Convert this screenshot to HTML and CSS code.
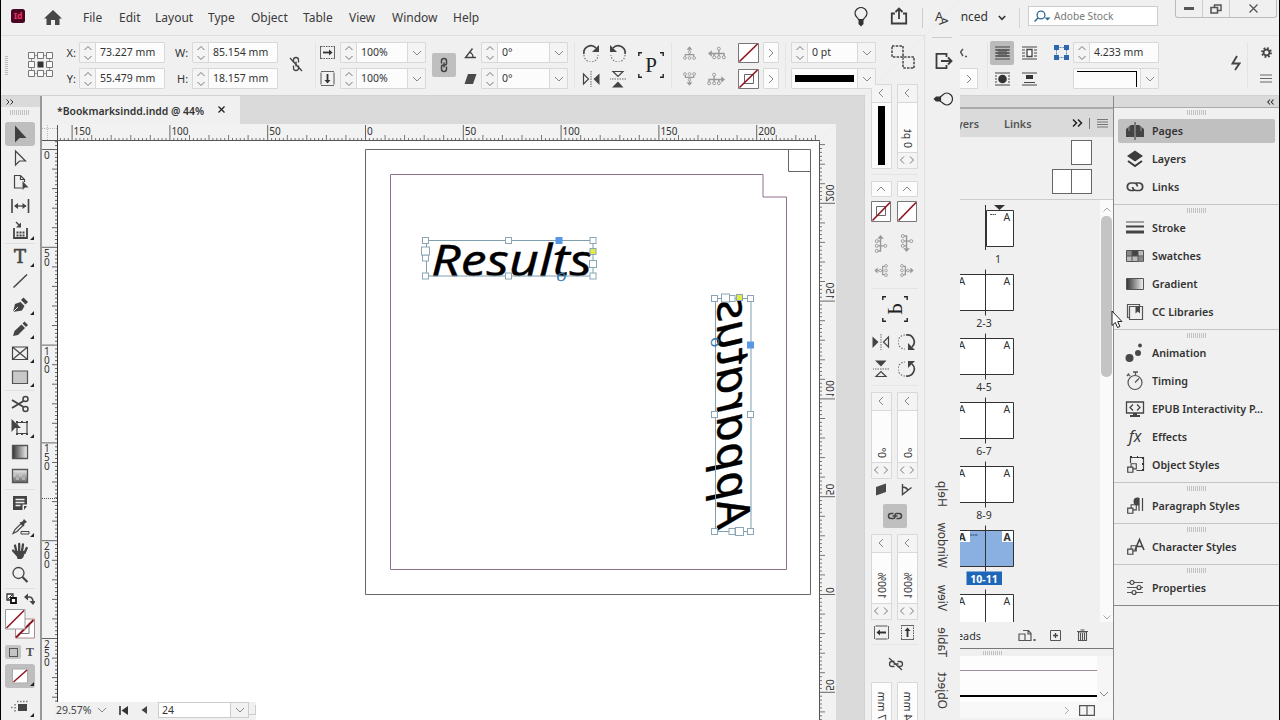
FILE: index.html
```html
<!DOCTYPE html>
<html lang="en">
<head>
<meta charset="utf-8">
<title>Bookmarksindd.indd</title>
<link rel="stylesheet" href="styles.css">
</head>
<body>
<svg class="defs" width="0" height="0" aria-hidden="true">
<defs>
<linearGradient id="gr"><stop offset="0" stop-color="#333"/><stop offset="1" stop-color="#f4f4f4"/></linearGradient>
<linearGradient id="grv" x2="0" y2="1"><stop offset="0" stop-color="#eee"/><stop offset="1" stop-color="#666"/></linearGradient>
<symbol id="none" viewBox="0 0 21 20"><path d="M.5.5h20v19H.5z" fill="#fff" stroke="#777"/><path d="M1.5 18.5 19.5 1" stroke="#8f1722" stroke-width="1.7"/></symbol>
<symbol id="noneS" viewBox="0 0 21 20"><path d="M.5.5h20v19H.5z" fill="#fff" stroke="#777"/><path d="M6.5 5.500h9v9h-9z" fill="none" stroke="#666"/><path d="M1.500 18.500 19.500 1" stroke="#8f1722" stroke-width="1.700"/></symbol>
<symbol id="ref" viewBox="0 0 25 25"><path d="M3.500 3.500h18v18h-18z" fill="none" stroke="#999"/><g fill="#f8f8f8" stroke="#777"><path d="M.5.5h6v6h-6zM9.500.5h6v6h-6zM18.500.5h6v6h-6zM.5 9.500h6v6h-6zM18.500 9.500h6v6h-6zM.5 18.500h6v6h-6zM9.500 18.500h6v6h-6zM18.500 18.500h6v6h-6z"/></g><path d="M9.500 9.500h6v6h-6z" fill="#333"/></symbol>
<symbol id="unlink" viewBox="0 0 14 16"><g fill="none" stroke="#444" stroke-width="1.300"><path d="M4.500 6.500V4a2.500 2.500 0 0 1 5 0v2.500M9.500 9.500V12a2.500 2.500 0 0 1-5 0V9.500M7 5.500v5"/><path d="M1 2l12 13"/></g></symbol>
<symbol id="link" viewBox="0 0 14 16"><g fill="none" stroke="#444" stroke-width="1.500"><path d="M4.500 6.500V4a2.500 2.500 0 0 1 5 0v2.500q0 1.500-2 1.500M9.500 9.500V12a2.500 2.500 0 0 1-5 0V9.500q0-1.500 2-1.500M7 5.500v5"/></g></symbol>
<symbol id="sx" viewBox="0 0 15 15"><path d="M.5 1v13M14.500 1v13" stroke="#666"/><path d="M1 1.500h13M1 13.500h13" stroke="#555" stroke-dasharray="1.500 1"/><path d="M3 7.500h8" stroke="#333" stroke-width="1.800"/><path d="M9 4.500l3.500 3L9 10.500z" fill="#333"/></symbol>
<symbol id="sy" viewBox="0 0 15 15"><path d="M1 .5h13M1 14.500h13" stroke="#666"/><path d="M1 1.500v12M14 1.500v12" stroke="#555"/><path d="M7.500 3v8" stroke="#333" stroke-width="1.800"/><path d="M4.500 9l3 3.500 3-3.500z" fill="#333"/></symbol>
<symbol id="ang" viewBox="0 0 13 12"><path d="M8.500 1.500 1.500 10.500h10.500M6 5q3 2 3 5.500" fill="none" stroke="#444" stroke-width="1.400"/></symbol>
<symbol id="shear" viewBox="0 0 13 12"><path d="M4 1h8.500L9 11H.5z" fill="#4a4a4a"/></symbol>
<symbol id="rot" viewBox="0 0 18 18"><path d="M2 10a7 7 0 0 1 12-6" fill="none" stroke="#444" stroke-width="1.700"/><path d="M2 11a7 7 0 0 0 14 0" fill="none" stroke="#777" stroke-width="1.200" stroke-dasharray="1.500 1.500"/><path d="M17 1v7h-7z" fill="#444"/></symbol>
<symbol id="flip" viewBox="0 0 18 18"><path d="M1.500 4v10l5-5z" fill="none" stroke="#444" stroke-width="1.200"/><path d="M17.500 3.500v11.500l-6-6z" fill="#444"/><path d="M9 1v16" stroke="#666" stroke-dasharray="1.500 1"/></symbol>
<symbol id="tree" viewBox="0 0 18 18"><path d="M9 1l3.500 4h-7z" fill="#999"/><path d="M9 5v7M4 14v-3h10v3" fill="none" stroke="#999" stroke-width="1.500"/><g fill="#eee" stroke="#999"><circle cx="3.500" cy="15" r="1.700"/><circle cx="9" cy="15" r="1.700"/><circle cx="14.500" cy="15" r="1.700"/><circle cx="9" cy="8" r="1.600"/></g></symbol>
<symbol id="treeH" viewBox="0 0 20 18"><path d="M1 10l4-3.500v7z" fill="#999"/><path d="M4 10h14v3M12.500 6v7M7.500 13v-3" fill="none" stroke="#999" stroke-width="1.500"/><g fill="#eee" stroke="#999"><circle cx="7.500" cy="14" r="1.600"/><circle cx="12.500" cy="14" r="1.600"/><circle cx="17.800" cy="14" r="1.600"/><circle cx="12.500" cy="5" r="1.600"/></g></symbol>
<symbol id="pp" viewBox="0 0 26 26"><path d="M.8 4V.8H4M22 .8h3.200V4M.8 22v3.200H4M22 25.200h3.200V22" fill="none" stroke="#222" stroke-width="1.400"/><text x="13" y="20" text-anchor="middle" font-family="Liberation Serif,serif" font-size="21" fill="#222">P</text></symbol>
<symbol id="dash" viewBox="0 0 24 24"><g fill="none" stroke="#444" stroke-width="1.500" stroke-dasharray="2.500 1.200"><path d="M1 1h11v11H1zM12 12h11v11H12z"/></g></symbol>
<symbol id="ud" viewBox="0 0 10 16"><path d="M1.500 5 5 1.500 8.500 5M1.500 11 5 14.500 8.500 11" fill="none" stroke="#777"/></symbol>
<symbol id="dn" viewBox="0 0 10 6"><path d="M1 1l4 4 4-4" fill="none" stroke="#888"/></symbol>
<symbol id="rt" viewBox="0 0 6 10"><path d="M1 1l4 4-4 4" fill="none" stroke="#888"/></symbol>
<symbol id="sub" viewBox="0 0 11 11"><path d="M4.500.8h5.700v5.700H4.500z" fill="none" stroke="#444" stroke-width="1.200"/><path d="M.8 4.500h5.700v5.700H.8z" fill="#eee" stroke="#444" stroke-width="1.300"/></symbol>
</defs>
</svg>

<div class="app">
<div class="fold">
  <div id="menubar" class="menubar">
    <svg class="logo" viewBox="0 0 14 14"><rect width="14" height="14" rx="2.500" fill="#4a0820"/><text x="7" y="10.200" text-anchor="middle" font-family="Noto Sans,sans-serif" font-weight="700" font-size="8.500" fill="#f0306a">Id</text></svg>
    <svg class="home" viewBox="0 0 18 15"><path d="M9 0 0 8.500h2.500V15H7v-5h4v5h4.500V8.500H18z" fill="#484848"/></svg>
    <span class="m m-file">File</span><span class="m m-edit">Edit</span><span class="m m-layout">Layout</span><span class="m m-type">Type</span><span class="m m-object">Object</span><span class="m m-table">Table</span><span class="m m-view">View</span><span class="m m-window">Window</span><span class="m m-help">Help</span>
    <svg class="bulb" viewBox="0 0 14 20"><path d="M4.500 12.500C4 10.500 1 9.500 1 6.500a6 6 0 0 1 12 0c0 3-3 4-3.500 6z" fill="none" stroke="#333" stroke-width="1.200"/><path d="M4.500 13h5v4l-2.500 2.500L4.500 17z" fill="#333"/></svg>
    <svg class="share" viewBox="0 0 18 18"><path d="M5 6.500H1.800v10h14.400v-10H13M9 12V2M5.500 5 9 1.500 12.500 5" fill="none" stroke="#3c3c3c" stroke-width="1.800"/></svg>
    <i class="vline"></i>
    <span class="aa">A</span>
  </div>
  <div id="controlbar" class="controlbar">
    <i class="vgrip"></i>
    <svg class="c-ref" width="25" height="25"><use href="#ref"/></svg>
    <div class="pair lab"><span>X:</span><span>Y:</span></div>
    <div class="pair w86"><div class="field"><b><svg width="10" height="16"><use href="#ud"/></svg></b><span>73.227 mm</span></div><div class="field"><b><svg width="10" height="16"><use href="#ud"/></svg></b><span>55.479 mm</span></div></div>
    <div class="pair lab"><span>W:</span><span>H:</span></div>
    <div class="pair w86"><div class="field"><b><svg width="10" height="16"><use href="#ud"/></svg></b><span>85.154 mm</span></div><div class="field"><b><svg width="10" height="16"><use href="#ud"/></svg></b><span>18.157 mm</span></div></div>
    <svg class="mid" width="14" height="16"><use href="#unlink"/></svg>
    <i class="sep"></i>
    <div class="pair ic"><svg width="15" height="15"><use href="#sx"/></svg><svg width="15" height="15"><use href="#sy"/></svg></div>
    <div class="pair w86"><div class="field"><b><svg width="10" height="16"><use href="#ud"/></svg></b><span>100%</span><em><svg width="10" height="6"><use href="#dn"/></svg></em></div><div class="field"><b><svg width="10" height="16"><use href="#ud"/></svg></b><span>100%</span><em><svg width="10" height="6"><use href="#dn"/></svg></em></div></div>
    <div class="linkbtn"><svg width="14" height="16"><use href="#link"/></svg></div>
    <div class="pair ic"><svg width="13" height="12"><use href="#ang"/></svg><svg width="13" height="12"><use href="#shear"/></svg></div>
    <div class="pair w87"><div class="field"><b><svg width="10" height="16"><use href="#ud"/></svg></b><span>0°</span><em><svg width="10" height="6"><use href="#dn"/></svg></em></div><div class="field"><b><svg width="10" height="16"><use href="#ud"/></svg></b><span>0°</span><em><svg width="10" height="6"><use href="#dn"/></svg></em></div></div>
    <i class="sep"></i>
    <div class="pair ic"><svg width="18" height="18"><use href="#rot"/></svg><svg width="18" height="18"><use href="#flip"/></svg></div>
    <div class="pair ic"><svg width="18" height="18" class="fx"><use href="#rot"/></svg><svg width="18" height="18" class="r90"><use href="#flip"/></svg></div>
    <svg class="c-ref" width="26" height="26"><use href="#pp"/></svg>
    <i class="sep"></i>
    <div class="pair ic"><svg width="15" height="18"><use href="#tree"/></svg><svg width="15" height="18" class="fy"><use href="#tree"/></svg></div>
    <div class="pair ic"><svg width="19" height="17"><use href="#treeH"/></svg><svg width="19" height="17" class="fx"><use href="#treeH"/></svg></div>
    <div class="pair ic"><svg width="21" height="20"><use href="#none"/></svg><svg width="21" height="20"><use href="#noneS"/></svg></div>
    <div class="pair w15"><div class="field nb"><svg width="6" height="10"><use href="#rt"/></svg></div><div class="field nb"><svg width="6" height="10"><use href="#rt"/></svg></div></div>
    <i class="sep"></i>
    <div class="pair w85"><div class="field"><b><svg width="10" height="16"><use href="#ud"/></svg></b><span>0 pt</span><em><svg width="10" height="6"><use href="#dn"/></svg></em></div><div class="field"><span class="stroke"></span><em><svg width="10" height="6"><use href="#dn"/></svg></em></div></div>
    <svg class="c-dash" width="24" height="24"><use href="#dash"/></svg>
  </div>

  <div class="body">
    <div class="tools">
      <div class="thead"><svg width="8" height="6"><path d="M.5.5 3 3 .5 5.500M4.500.5 7 3 4.500 5.500" fill="none" stroke="#333"/></svg></div>
      <i class="grip"></i>
      <div class="tool on"><svg viewBox="0 0 24 24"><path d="M7 3.500v17l4.500-4.500H18.500z" fill="#404040"/></svg></div>
      <div class="tool"><svg viewBox="0 0 24 24"><path d="M7.500 5v14l4-4h6z" fill="none" stroke="#444" stroke-width="1.200"/></svg></div>
      <div class="tool"><svg viewBox="0 0 24 24"><path d="M14 18H6.500V5.500h6l4 4V12M12.500 5.500v4h4" fill="none" stroke="#444" stroke-width="1.200"/><path d="M14.500 11v9l2.500-2.500h3.500z" fill="#444"/></svg></div>
      <div class="tool"><svg viewBox="0 0 24 24"><path d="M4 5v14M20.500 5v14" stroke="#444" stroke-width="1.600"/><path d="M7 12h11" stroke="#444" stroke-width="1.300"/><path d="M6 12l4-3v6zM18.500 12l-4-3v6z" fill="#444"/></svg></div>
      <div class="tool sb"><svg viewBox="0 0 24 24"><path d="M6 10v10h13V10" fill="none" stroke="#444" stroke-width="1.800"/><path d="M8.500 17.500h8M8.500 14.500h8" stroke="#444" stroke-width="2" stroke-dasharray="2 1"/><path d="M8 4l4 4" stroke="#444" stroke-width="1.400"/><path d="M13 4.500v5H8z" fill="#444"/></svg></div>
      <hr>
      <div class="tool sb"><svg viewBox="0 0 24 24"><text x="12" y="18" text-anchor="middle" font-family="DejaVu Serif,serif" font-size="18" fill="#444" stroke="#444" stroke-width=".6">T</text></svg></div>
      <div class="tool"><svg viewBox="0 0 24 24"><path d="M5.500 18.500 19 5.500" stroke="#444" stroke-width="1.500"/></svg></div>
      <div class="tool sb"><svg viewBox="0 0 24 24"><path d="M5 19l2-8 5.500-2 4 4L14 17.500z" fill="#444"/><path d="M13 7l2.500-2.500 4.500 4.500-2.500 2.500z" fill="#444"/><path d="M5 19l5-5" stroke="#eee"/></svg></div>
      <div class="tool sb"><svg viewBox="0 0 24 24"><path d="M5 19l1.500-5 7-6.500 3.500 3.500-7 7z" fill="#444"/><path d="M14.500 6.500l2-2 3.500 3.500-2 2z" fill="#444"/></svg></div>
      <div class="tool sb"><svg viewBox="0 0 24 24"><path d="M4.500 6h15v12.500h-15zM4.500 6l15 12.500M19.500 6l-15 12.500" fill="none" stroke="#444" stroke-width="1.200"/></svg></div>
      <div class="tool sb"><svg viewBox="0 0 24 24"><path d="M4.500 6h15v12.500h-15z" fill="#c8c8c8" stroke="#555" stroke-width="1.200"/></svg></div>
      <hr>
      <div class="tool"><svg viewBox="0 0 24 24"><g fill="none" stroke="#444" stroke-width="1.500"><circle cx="17.500" cy="7" r="2.500"/><circle cx="17.500" cy="17" r="2.500"/><path d="M15.500 9 4 16M15.500 15 4 8" stroke-width="2"/></g></svg></div>
      <div class="tool sb"><svg viewBox="0 0 24 24"><path d="M9 6.500h10v11H9z" fill="none" stroke="#444" stroke-width="1.200"/><path d="M8 5h2v2H8zM18 5h2v2h-2zM18 17h2v2h-2zM8 17h2v2H8zM13 5h2v2h-2zM13 17h2v2h-2z" fill="#444"/><path d="M3.500 3v13l3.500-4h6z" fill="#444"/></svg></div>
      <div class="tool"><svg viewBox="0 0 24 24"><path d="M4.500 5.500h15v13h-15z" fill="url(#gr)" stroke="#555" stroke-width="1.300"/></svg></div>
      <div class="tool"><svg viewBox="0 0 24 24"><path d="M4.500 5.500h15v13h-15z" fill="url(#grv)" stroke="#555" stroke-width="1.300"/><path d="M5 10h3v3H5zM11 10h3v3h-3zM8 13h3v3H8zM14 13h3v3h-3z" fill="#ccc" opacity=".6"/></svg></div>
      <hr>
      <div class="tool"><svg viewBox="0 0 24 24"><path d="M5 5h14v8.500h-4.500V19H5zM16 19v-4h3z" fill="#444"/><path d="M7.500 8.500h9M7.500 11.500h9M7.500 14.500h5" stroke="#eee" stroke-width="1.300"/></svg></div>
      <div class="tool sb"><svg viewBox="0 0 24 24"><path d="M5 18.500l2-4 6-6 2 2-6 6z" fill="#eee" stroke="#444" stroke-width="1.200"/><path d="M11.500 7.500l3-1 1.500-2.500 3 3-2.500 1.500-.5 3z" fill="#444"/><path d="M13 16.500h8v2.500h-8z" fill="none" stroke="#444"/></svg></div>
      <div class="tool"><svg viewBox="0 0 24 24"><g stroke="#444" stroke-width="2.300" stroke-linecap="round"><path d="M8.500 13 7 6.500M11.200 12V5M14 12l1-6.500M16.500 14l2.200-5M9 16l-4-4.500"/></g><path d="M7.500 12h9.500l-1.500 6-2 2h-4z" fill="#444"/></svg></div>
      <div class="tool"><svg viewBox="0 0 24 24"><circle cx="10.500" cy="10" r="5.500" fill="none" stroke="#444" stroke-width="1.300"/><path d="M14.500 14l5 5" stroke="#444" stroke-width="2.200"/></svg></div>
      <hr>
      <div class="minirow"><svg width="11" height="11"><path d="M1 1h6v6H1z" fill="#fff" stroke="#333" stroke-width="1.300"/><path d="M5 5h5v5H5z" fill="#fff" stroke="#111" stroke-width="1.800"/><path d="M2 6l4-4" stroke="#333"/></svg><svg width="11" height="12"><path d="M3 4h2q4 0 4 5" fill="none" stroke="#444" stroke-width="1.500"/><path d="M0 4l4-3.500v7zM5.500 8H12l-3 4z" fill="#444"/></svg></div>
      <div class="fillstroke"><svg width="30" height="30"><path d="M10.500 10h19v19h-19z" fill="#fff" stroke="#b08a8a"/><path d="M14 24.500h10v-10" fill="none" stroke="#777"/><path d="M11 28.500 28.500 11" stroke="#8f1722" stroke-width="2"/><path d="M.5.5h19.500V20H.5z" fill="#fff" stroke="#999"/><path d="M1.500 19 19 1.500" stroke="#8f1722" stroke-width="1.600"/></svg></div>
      <div class="minirow two"><span class="sq"><i></i></span><b>T</b></div>
      <div class="tool on sb nn"><svg viewBox="0 0 24 24"><path d="M4.500 5h15v14h-15z" fill="#fff" stroke="#aaa"/><path d="M5.500 18 19 6" stroke="#8f1722" stroke-width="1.500"/></svg></div>
      <div class="tool sb last"><svg viewBox="0 0 24 24"><path d="M10 9h9v7h-9z" fill="#444"/><path d="M9 6.500h11M7 9v8M3 12.500h3" fill="none" stroke="#777" stroke-dasharray="1.500 1.500" stroke-width="1.500"/></svg></div>
    </div>
    <div class="doc">
      <div class="tabs"><div class="tab"><span>*Bookmarksindd.indd @ 44%</span><svg width="7" height="7"><path d="M.5.5l6 6M6.500.5l-6 6" stroke="#222" stroke-width="1.300"/></svg></div></div>
      <svg id="rulerTop" class="ruler-top" viewBox="42 124 918 17"></svg>
      <div class="view">
        <svg id="rulerLeft" class="ruler-left" viewBox="42 141 16 579"></svg>
        <div class="stage">
        <svg class="canvas" viewBox="58 141 762 579">
          <g fill="none" stroke="#666"><path d="M365.500 149.500h445v445h-445z"/><path d="M788.500 149.500v22h22"/></g>
          <path d="M390.500 174.500h372.500v22.500h23.500v372.500h-396z" fill="none" stroke="#8e6f8e"/>
          <text x="431" y="275.500" class="hand" font-size="43" textLength="161" lengthAdjust="spacingAndGlyphs">Results</text>
          <g transform="matrix(0 -1 -1 0 716.500 528)"><text class="hand" font-size="46" textLength="229" lengthAdjust="spacingAndGlyphs">Apparatus</text></g>
          <g fill="none" stroke="#7f9fb0"><path d="M426.500 240.500h166.500v35.500h-166.500z"/><path d="M715.500 298.500h35.500v233h-35.500z"/></g>
          <g id="handles"></g>
          <text x="556.500" y="280.500" class="port">O</text>
          <text class="port" transform="matrix(0 -1 -1 0 711 347)">O</text>
        </svg>
        <div class="status"><span>29.57%</span><svg width="10" height="6"><use href="#dn"/></svg><svg width="9" height="9"><path d="M1 0v9" stroke="#333" stroke-width="1.600"/><path d="M9 0v9L2.500 4.500z" fill="#333"/></svg><svg width="6" height="8"><path d="M6 0v8L.5 4z" fill="#444"/></svg><div class="pg"><span>24</span><em><svg width="10" height="6"><use href="#dn"/></svg></em></div><i></i></div>
        </div>
      </div>
    </div>
  </div>
  <div id="mirror" class="mirror"></div>
</div>

<div class="right">
  <div class="rmenu">
    <span class="adv"><span>Advanced</span></span>
    <svg width="8" height="6"><path d="M.8 1 4 4.300 7.200 1" fill="none" stroke="#333" stroke-width="1.600"/></svg>
    <i></i>
    <div class="search"><svg width="18" height="13"><circle cx="8" cy="5" r="3.900" fill="none" stroke="#2b6a94" stroke-width="1.300"/><path d="M5 8 1.500 11.500" stroke="#2b6a94" stroke-width="1.400"/><path d="M11.500 7.500h6l-3 3z" fill="#2b6a94"/></svg><span>Adobe Stock</span></div>
    <div class="win"><span><svg width="10" height="3"><path d="M0 0h10v3H0z" fill="#555"/></svg></span><span><svg width="12" height="10"><path d="M4.500 1h6.500v5.500H4.500z" fill="none" stroke="#555" stroke-width="1.500"/><path d="M1 3.500h6.500V9H1z" fill="#eee" stroke="#555" stroke-width="1.600"/></svg></span><span><svg width="9" height="9"><path d="M.5.5l8 8M8.500.5l-8 8" stroke="#555" stroke-width="1.300"/></svg></span></div>
  </div>
  <div class="rcontrol">
    <div class="pair rc1"><svg width="9" height="10"><path d="M3 1 .5 4 3 8M5 8.500h2" fill="none" stroke="#555" stroke-width="1.500"/></svg><div class="field nb"><svg width="6" height="10"><use href="#rt"/></svg></div></div>
    <i class="sep"></i>
    <div class="pair wrap"><span class="sel"><svg width="15" height="14"><path d="M0 1h15M0 13h15M0 4h4M11 4h4M0 7h4M11 7h4M0 10h4M11 10h4" stroke="#444" stroke-width="1.200"/><path d="M3 3h9v8H3z" fill="#777"/><path d="M1 4h13M1 7h13M1 10h13" stroke="#444"/></svg></span><svg width="15" height="14"><path d="M0 1h15M0 13h15M0 4h2M13 4h2M0 7h2M13 7h2M0 10h2M13 10h2" stroke="#444" stroke-width="1.200"/><circle cx="7.500" cy="7" r="4.300" fill="#333"/></svg></div>
    <div class="pair wrap"><svg width="15" height="14"><path d="M0 1h15M0 13h15M0 4h3M12 4h3M0 7h3M12 7h3M0 10h3M12 10h3" stroke="#444" stroke-width="1.200"/><path d="M5 3.500h5v7H5z" fill="#fff" stroke="#444" stroke-width="1.300"/></svg><svg width="15" height="14"><path d="M0 1h15M0 13h15M2 10.500h11" stroke="#444" stroke-width="1.200"/><path d="M4 3h7v4H4z" fill="#333"/></svg></div>
    <div class="pair corner"><svg width="15" height="15"><path d="M2.500 2.500h10v10h-10z" fill="none" stroke="#5d86b8" stroke-dasharray="2 1"/><path d="M0 0h5v5H0zM10 0h5v5h-5zM0 10h5v5H0zM10 10h5v5h-5z" fill="#2d67ae"/></svg></div>
    <div class="pair w86"><div class="field"><b><svg width="10" height="16"><use href="#ud"/></svg></b><span>4.233 mm</span></div><div class="field"><span class="cornerline"></span><em><svg width="10" height="6"><use href="#dn"/></svg></em></div></div>
    <svg class="bolt" width="10" height="16"><path d="M6 1 1.500 8.500h7L4 15" fill="none" stroke="#444" stroke-width="1.900"/></svg>
    <i class="sep"></i>
    <div class="pair gear"><svg width="11" height="11"><circle cx="5.500" cy="5.500" r="4.400" fill="none" stroke="#444" stroke-width="2" stroke-dasharray="1.800 1.650"/><circle cx="5.500" cy="5.500" r="2.900" fill="none" stroke="#444" stroke-width="1.700"/></svg><svg width="12" height="9"><path d="M0 1h12M0 4.500h12M0 8h12" stroke="#666"/></svg></div>
  </div>
  <div class="docks">
    <div class="left">
      <div class="dhead"></div>
      <div class="ptabs"><span class="t1"><span>Layers</span></span><span class="t2">Links</span><svg width="11" height="8"><path d="M1 .5 4.500 4 1 7.500M6 .5 9.500 4 6 7.500" fill="none" stroke="#222" stroke-width="1.500"/></svg><i></i><svg width="11" height="9"><path d="M0 .5h11M0 3h11M0 5.500h11M0 8h11" stroke="#777"/></svg></div>
      <div class="masters"><i class="one"></i><i class="dbl"><b></b></i></div>
      <div class="plist">
        <svg class="spreads" viewBox="960 200 140 422" width="140" height="422">
          <g id="spreads"></g>
        </svg>
        <div class="scroll"><svg width="8" height="5"><path d="M.5 4.500 4 1l3.500 3.500" fill="none" stroke="#aaa"/></svg><i></i><svg class="end" width="8" height="5"><path d="M.5.5 4 4 7.500.5" fill="none" stroke="#aaa"/></svg></div>
      </div>
      <div class="pfoot"><span class="rd"><span>Spreads</span></span>
        <svg width="19" height="13"><path d="M1 5h6v6.500H1zM5 1.500h5.500l2.500 3v7H7M10 1.500v3.500h3" fill="none" stroke="#555" stroke-width="1.200"/><path d="M15.500 10h2v2h-2z" fill="#555"/></svg>
        <svg width="11" height="11"><path d="M.5.5h10v10H.5z" fill="none" stroke="#555"/><path d="M5.500 3v5M3 5.500h5" stroke="#444" stroke-width="1.300"/></svg>
        <svg width="11" height="12"><path d="M1.500 3h8v8.500h-8zM0 2.500h11M3.500 1h4M3.500 4v7M5.500 4v7M7.500 4v7" fill="none" stroke="#555" stroke-width="1.100"/></svg></div>
      <div class="bgrip"><i class="grip"></i></div>
      <div class="preview"><div class="pv"><i class="ln1"></i><i class="ln2"></i></div><svg width="10" height="6"><use href="#dn"/></svg></div>
      <div class="pvfoot"><svg width="6" height="9"><path d="M1 1l3.500 3.500L1 8" fill="none" stroke="#aaa"/></svg><svg width="16" height="11"><path d="M.6.6h14.800v9.800H.6zM8 .6v9.800" fill="#f5f5f5" stroke="#555" stroke-width="1.200"/></svg></div>
    </div>
    <div class="panels">
      <div class="dhead"><svg width="7" height="6"><path d="M3 .5.8 3 3 5.500M6.500.5 4.300 3l2.200 2.500" fill="none" stroke="#333" stroke-width="1.100"/></svg></div>
      <div class="grp g1"><i class="grip"></i>
        <div class="it act"><svg viewBox="0 0 20 20"><path d="M1 8l5-4h3v12H1zM11 4h3l5 4v8h-8z" fill="#444"/><path d="M10 1v18" stroke="#333"/><path d="M4 6v4M16 6v4" stroke="#aaa" stroke-width=".8"/></svg><span>Pages</span></div>
        <div class="it"><svg viewBox="0 0 20 20"><path d="M10 1.500l8 5.500-8 5.500L2 7z" fill="#3c3c3c"/><path d="M3 12l7 5 7-5" fill="none" stroke="#3c3c3c" stroke-width="2"/></svg><span>Layers</span></div>
        <div class="it"><svg viewBox="0 0 20 20"><g fill="none" stroke="#444" stroke-width="1.700"><path d="M9 13.500H5.500a3.800 3.800 0 0 1 0-7.500H9q3 0 3.500 3.500"/><path d="M11 6h3.500a3.800 3.800 0 0 1 0 7.500H11Q8 13.500 7.500 10"/></g></svg><span>Links</span></div>
      </div>
      <div class="grp g2"><i class="grip"></i>
        <div class="it"><svg viewBox="0 0 20 20"><path d="M1 4h18" stroke="#555"/><path d="M1 8.500h18" stroke="#444" stroke-width="2"/><path d="M1 14h18" stroke="#444" stroke-width="3"/></svg><span>Stroke</span></div>
        <div class="it"><svg viewBox="0 0 20 20"><path d="M1.500 4.500h17v11h-17z" fill="#bbb" stroke="#555"/><path d="M7 4.500h6V10H7z" fill="#444"/><path d="M2 5h5v5H2zM13 10.500h5v5h-5z" fill="#888"/><path d="M1.500 10h17M7 4.500v11M13 4.500v11" stroke="#555"/></svg><span>Swatches</span></div>
        <div class="it"><svg viewBox="0 0 20 20"><path d="M1.500 4.500h17v11h-17z" fill="url(#gr)" stroke="#555"/></svg><span>Gradient</span></div>
        <div class="it"><svg viewBox="0 0 20 20"><path d="M4.500 4.500h13v13h-13z" fill="none" stroke="#555" stroke-width="1.200"/><path d="M4.500 15.500h-2v-13h12v2" stroke="#555" stroke-width="1.200" fill="none"/><path d="M10.500 4.500h4.500v7L12.800 9.500 10.500 11.500z" fill="#444"/></svg><span>CC Libraries</span></div>
      </div>
      <div class="grp g3"><i class="grip"></i>
        <div class="it"><svg viewBox="0 0 20 20"><g fill="#484848"><circle cx="4.500" cy="15" r="4"/><circle cx="13" cy="10" r="3"/><circle cx="15" cy="2.500" r="1.900"/></g></svg><span>Animation</span></div>
        <div class="it"><svg viewBox="0 0 20 20"><circle cx="10" cy="11.500" r="7" fill="none" stroke="#555" stroke-width="1.200"/><path d="M10 11.500l4-4M8 1h5M10.500 1v3M3 3l2 2M2 5l2-2.500" stroke="#555" stroke-width="1.300" fill="none"/></svg><span>Timing</span></div>
        <div class="it"><svg viewBox="0 0 20 20"><path d="M1.500 3h17v11h-17z" fill="none" stroke="#444" stroke-width="1.300"/><path d="M8 5.500 5 8.500l3 3M12 5.500l3 3-3 3" fill="none" stroke="#444" stroke-width="1.300"/><path d="M8 14h4v2h3v2H5v-2h3z" fill="#444"/></svg><span>EPUB Interactivity P...</span></div>
        <div class="it"><svg viewBox="0 0 20 20"><text x="10" y="15" text-anchor="middle" font-family="Open Sans,sans-serif" font-style="italic" font-weight="400" font-size="16" fill="#333">fx</text></svg><span>Effects</span></div>
        <div class="it"><svg viewBox="0 0 20 20"><path d="M5.500 8V2.500h13v13h-7" fill="none" stroke="#444" stroke-width="1.200"/><path d="M5 2h2M12 2h1M18 2v2M18 8v2M18 14v2" stroke="#333" stroke-width="2"/><use href="#sub" x="2" y="8" width="10" height="10"/></svg><span>Object Styles</span></div>
      </div>
      <div class="grp g4"><i class="grip"></i><div class="it"><svg viewBox="0 0 20 20"><path d="M17.500 2v13M14 2v13" stroke="#444" stroke-width="1.200"/><path d="M18 1.500h-5.500a4 4 0 0 0 0 8H14v-8z" fill="#444"/><use href="#sub" x="2" y="8" width="10" height="10"/></svg><span>Paragraph Styles</span></div></div>
      <div class="grp g4"><i class="grip"></i><div class="it"><svg viewBox="0 0 20 20"><path d="M10 13 14.500 2.500 19 13M11.500 9.500h6" fill="none" stroke="#444" stroke-width="1.600"/><use href="#sub" x="2" y="8" width="10" height="10"/></svg><span>Character Styles</span></div></div>
      <div class="grp g4 lastg"><i class="grip"></i><div class="it"><svg viewBox="0 0 20 20"><path d="M2 4.500h16M2 9.500h16M2 14.500h16" stroke="#555" stroke-width="1.200"/><g fill="#eee" stroke="#444" stroke-width="1.200"><circle cx="7" cy="4.500" r="2"/><circle cx="14" cy="9.500" r="2"/><circle cx="9" cy="14.500" r="2"/></g></svg><span>Properties</span></div></div>
    </div>
  </div>
</div>
<svg class="cursor" width="12" height="19"><path d="M1 1v14.500l3.300-3 2.200 5 2.400-1-2.200-5h4.200z" fill="#fff" stroke="#222"/></svg>
</div>
<script src="app.js"></script>
</body>
</html>
```

FILE: styles.css
```css
* { box-sizing: border-box; }
body { margin: 0; font-family: "Noto Sans", "Open Sans", sans-serif; font-size: 11px; color: #333; background: #f0f0f0; overflow: hidden; }
svg { display: block; flex: none; }
i { font-style: normal; display: block; }
.defs { position: absolute; }
.app { position: relative; display: flex; width: 1280px; height: 720px; overflow: hidden; border-left: 1px solid #000; border-right: 1px solid #000; }
.fold { position: relative; flex: none; width: 960px; height: 720px; margin-left: -1px; overflow: hidden; display: flex; flex-direction: column; border-left: 1px solid #000; }

.menubar { display: flex; align-items: center; flex: none; width: 960px; height: 36px; margin-left: -1px; background: #f0f0f0; border-bottom: 1px solid #e0e0e0; font-size: 12px; color: #3a3a3a; }
.logo { width: 14px; height: 14px; margin: -3px 19px 0 11px; }
.home { width: 18px; height: 15px; margin-right: 21px; }
.m { flex: none; white-space: nowrap; line-height: 16px; }
.m-file { width: 36px; } .m-edit { width: 36px; } .m-layout { width: 53px; } .m-type { width: 43px; } .m-object { width: 52px; } .m-table { width: 46px; } .m-view { width: 43px; } .m-window { width: 61px; } .m-help { width: 401px; }
.bulb { width: 14px; height: 20px; margin: -2px 22px 0 0; }
.share { width: 18px; height: 18px; margin-right: 14px; margin-top: -3px; }
.vline { width: 1px; height: 20px; background: #ccc; margin-right: 12px; }
.aa { font-size: 13px; line-height: 14px; margin-top: -4px; }

.controlbar { display: grid; flex: none; grid-template-columns: 23px 36px 15px 96px 17px 97px 26px 5px 20px 92px 32px 17px 93px 8px 27px 29px 33px 11px 25px 31px 25px 22px 6px 101px 68px; width: 960px; height: 60px; margin-left: -1px; padding: 6px 0 0 5px; background: #f0f0f0; border-bottom: 1px solid #d2d2d2; font-size: 11px; }
.vgrip { width: 3px; height: 20px; margin-top: 14px; background: repeating-linear-gradient(#bbb 0 1px, transparent 1px 2px); }
.c-ref { margin-top: 10px; }
.c-dash { margin-top: 3px; margin-left: -1px; }
.mid { margin-top: 14px; }
.sep { width: 1px; height: 46px; background: #e4e4e4; }
.pair { display: grid; grid-template-rows: 21px 21px; gap: 5px; align-content: start; }
.pair.lab { justify-items: end; width: 12px; line-height: 22px; }
.pair.ic { align-items: center; justify-items: center; width: max-content; }
.w86 { width: 86px; } .w87 { width: 87px; } .w85 { width: 85px; } .w15 { width: 16px; }
.field { display: flex; height: 21px; background: #fcfcfc; border: 1px solid #d8d8d8; border-radius: 1px; overflow: hidden; }
.field b { flex: none; display: flex; align-items: center; justify-content: center; width: 16px; background: #f4f4f4; border-right: 1px solid #d8d8d8; }
.field span { flex: 1; padding-left: 4px; line-height: 19px; white-space: nowrap; font-size: 10.5px; }
.field em { flex: none; display: flex; align-items: center; justify-content: center; width: 18px; background: #f4f4f4; border-left: 1px solid #d8d8d8; }
.field.nb { align-items: center; justify-content: center; }
.field span.stroke { flex: 1; height: 7px; margin: 6px 3px; padding: 0; background: #000; }
.linkbtn { display: flex; align-items: center; justify-content: center; width: 24px; height: 24px; margin-top: 11px; background: #bfbfbf; border-radius: 2px; }
.fx { transform: scaleX(-1); } .fy { transform: scaleY(-1); } .r90 { transform: rotate(90deg); }

.body { display: flex; flex: 1; min-height: 0; }
.tools { flex: none; width: 41px; background: #f0f0f0; border-right: 2px solid #999; display: flex; flex-direction: column; overflow: hidden; }
.thead { flex: none; height: 11px; padding: 3px 0 0 5px; background: #dadada; }
.grip { flex: none; width: 20px; height: 5px; background: repeating-linear-gradient(90deg, #c2c2c2 0 1px, transparent 1px 2px); }
.tools .grip { margin: 3px 0 7px 9px; }
.tool { position: relative; flex: none; width: 30px; height: 24px; margin-left: 4px; border-radius: 3px; display: flex; justify-content: center; }
.tool svg { width: 24px; height: 24px; }
.tool.on { background: #bebebe; }
.tool.sb::after { content: ""; position: absolute; right: 1px; bottom: 2px; border-left: 4px solid transparent; border-bottom: 4px solid #222; }
.tools hr { flex: none; width: 30px; height: 3px; margin: 0 0 0 4px; border: 0; background: linear-gradient(transparent 1px, #e0e0e0 1px 2px, transparent 2px); }
.minirow { flex: none; display: flex; gap: 6px; height: 18px; padding: 3px 0 0 5px; }
.minirow svg:first-child { margin-right: 1px; }
.minirow.two { height: 16px; padding: 0 0 0 4px; gap: 5px; margin-top: 1px; margin-bottom: -1px; }
.sq { width: 16px; height: 14px; background: #c4c4c4; border-radius: 2px; display: flex; align-items: center; justify-content: center; }
.sq i { width: 9px; height: 9px; border: 1px solid #555; }
.two b { font-family: "DejaVu Serif", serif; font-size: 10.5px; line-height: 14px; color: #555; }
.fillstroke { flex: none; height: 36px; padding: 1px 0 0 4px; }
.tool.nn { margin-top: 4px; }
.tool.last { margin-top: 7px; }

.doc { flex: 1; min-width: 0; display: flex; flex-direction: column; }
.tabs { flex: none; height: 28px; background: #dadada; }
.tab { display: flex; align-items: center; width: 198px; height: 28px; padding: 1px 0 0 15px; background: #f0f0f0; font-size: 10.4px; font-weight: 600; }
.tab span { width: 161px; white-space: nowrap; }
.tab svg { margin-top: -3px; }
.ruler-top { flex: none; width: 918px; height: 17px; background: #f2f2f2; }
.view { flex: 1; min-height: 0; display: flex; }
.ruler-left { width: 16px; height: 579px; background: #f2f2f2; }
.stage { flex: none; width: 762px; height: 579px; background: #fff; display: flex; flex-direction: column; }
.canvas { width: 762px; height: 579px; margin-bottom: -18px; flex: none; }
.hand { font-family: "Noto Sans", "Open Sans", sans-serif; font-style: italic; font-weight: 400; fill: #000; stroke: #000; stroke-width: .3; stroke-linejoin: round; }
.port { font-family: "Liberation Serif", serif; font-style: italic; font-size: 13px; fill: #2f77b8; stroke: #2f77b8; stroke-width: .4; }
.rlab { font-family: "Noto Sans", sans-serif; font-size: 10px; fill: #333; }
.status { position: relative; display: flex; align-items: center; width: 201px; height: 18px; margin-left: -3px; padding: 0 0 2px 1px; background: #f0f0f0; font-size: 10.5px; color: #444; }
.status > span { flex: none; width: 41px; }
.status > svg:nth-of-type(1) { margin-right: 12px; }
.status > svg:nth-of-type(2) { margin-right: 13px; }
.status > svg:nth-of-type(3) { margin-right: 11px; }
.pg { flex: none; display: flex; width: 91px; height: 16px; background: #fff; border: 1px solid #ccc; line-height: 14px; }
.pg span { flex: 1; padding-left: 3px; color: #333; }
.pg em { display: flex; align-items: center; justify-content: center; width: 18px; background: #f2f2f2; border-left: 1px solid #ccc; }
.status > i { width: 9px; height: 10px; border: 1px solid #ccc; border-width: 0 1px 1px 0; }

/* Screen folded over its anti-diagonal: the sheet is a copy of the top bars. */
.mirror { position: absolute; left: -1px; top: 0; width: 960px; height: 141px; transform-origin: 0 0; transform: matrix(0, -1, -1, 0, 960, 960); clip-path: polygon(0 0, 959px 0, 818px 141px, 0 141px); background: #dadada; }
.mirror .menubar, .mirror .controlbar { margin-left: 0; }
.mirror .gap { height: 28px; background: #dadada; }
.mirror .ruler-top { margin-left: 42px; }

.right { flex: none; width: 319px; display: flex; flex-direction: column; }
.rmenu { flex: none; display: flex; align-items: center; height: 36px; border-bottom: 1px solid #e0e0e0; }
.adv { flex: none; display: flex; justify-content: flex-end; width: 28px; overflow: hidden; font-size: 12px; line-height: 16px; margin-right: 10px; margin-top: -2px; }
.rmenu > i { width: 1px; height: 20px; margin: 0 8px 0 13px; background: #d4d4d4; }
.search { flex: none; display: flex; align-items: center; width: 130px; height: 20px; margin-top: -3px; padding-left: 4px; gap: 3px; background: #fff; border: 1px solid #ccc; font-size: 10.2px; color: #777; }
.win { flex: none; align-self: flex-start; display: flex; width: 102px; height: 18px; margin-left: 17px; border: 1px solid #bbb; border-top: 0; border-radius: 0 0 3px 3px; }
.win span { display: flex; align-items: center; justify-content: center; width: 27px; border-right: 1px solid #ccc; }
.win span:last-child { flex: 1; border: 0; }
.rcontrol { flex: none; display: grid; grid-template-columns: 27px 3px 27px 36px 20px 158px 16px 13px 17px; height: 60px; padding-top: 6px; border-bottom: 1px solid #d2d2d2; }
.rc1 { width: 18px; align-items: center; }
.rc1 .field { width: 18px; border-left: 0; }
.wrap { width: 24px; align-items: center; justify-items: center; }
.wrap .sel { display: flex; align-items: center; justify-content: center; width: 24px; height: 24px; background: #bbb; border-radius: 2px; }
.corner { align-items: center; justify-items: center; width: 15px; margin-left: 1px; }
.field span.cornerline { margin: 2px 3px 1px; border-top: 1px solid #000; border-right: 1px solid #000; }
.bolt { margin-top: 13px; }
.gear { width: 12px; align-items: center; justify-items: center; }
.docks { flex: 1; min-height: 0; display: flex; }
.dhead { flex: none; height: 12px; background: #dadada; border-bottom: 1px solid #aaa; }
.left { flex: none; width: 154px; display: flex; flex-direction: column; border-right: 1px solid #888; }
.left .dhead { height: 13px; border-bottom: 2px solid #aaa; }
.ptabs { flex: none; display: flex; align-items: center; height: 28px; background: #dadada; font-size: 10.8px; font-weight: 600; color: #555; }
.t1 { display: flex; justify-content: flex-end; width: 19px; margin-right: 25px; overflow: hidden; }
.t2 { width: 68px; }
.ptabs i { width: 1px; height: 11px; background: #777; margin: 0 7px 0 6px; }
.masters { flex: none; height: 63px; padding: 3px 21px 0 0; border-bottom: 1px solid #ccc; display: flex; flex-direction: column; align-items: flex-end; gap: 4px; }
.masters i { height: 25px; background: #fff; border: 1px solid #666; }
.one { width: 21px; } .dbl { width: 40px; }
.dbl b { display: block; width: 19px; height: 23px; border-right: 1px solid #666; }
.plist { flex: none; display: flex; height: 422px; }
.spreads text { font-size: 10.5px; fill: #333; }
.scroll { flex: none; width: 13px; background: #fafafa; display: flex; flex-direction: column; align-items: center; padding: 7px 0 2px; }
.scroll i { width: 11px; height: 161px; margin-top: 4px; background: #c4c4c4; border-radius: 5px; }
.scroll .end { margin-top: auto; }
.pfoot { flex: none; display: flex; align-items: center; height: 27px; border-bottom: 1px solid #777; }
.rd { display: flex; justify-content: flex-end; width: 21px; margin-right: 37px; overflow: hidden; font-size: 10.8px; }
.pfoot svg:nth-of-type(1) { margin-right: 13px; }
.pfoot svg:nth-of-type(2) { margin-right: 16px; }
.bgrip { flex: none; height: 7px; padding: 2px 0 0 23px; }
.bgrip .grip { height: 4px; }
.preview { flex: none; display: flex; align-items: flex-end; height: 46px; background: #f6f6f6; }
.pv { width: 137px; height: 46px; margin-right: 2px; background: #fdfdfd; overflow: hidden; }
.preview > svg { margin-bottom: 5px; }
.ln1 { height: 1px; margin-top: 14px; background: #9c8a9c; }
.ln2 { height: 2px; margin-top: 24px; background: #000; }
.pvfoot { flex: none; display: flex; align-items: center; height: 16px; padding-left: 104px; gap: 9px; background: #f8f8f8; }

.panels { flex: 1; display: flex; flex-direction: column; }
.panels .dhead { display: flex; justify-content: flex-end; padding: 3px 5px 0 0; }
.grp { flex: none; padding: 3px 4px 0; border-bottom: 1px solid #c4c4c4; }
.g1 { height: 97px; padding-top: 2px; }
.g2 { height: 125px; } .g3 { height: 153px; } .g4 { height: 41px; }
.grp.lastg { border-color: #888; }
.grp .grip { margin: 0 auto 1px; }
.g1 .grip { margin-bottom: 4px; }
.it { display: flex; align-items: center; height: 28px; padding-left: 7px; font-size: 10.7px; font-weight: 600; color: #333; gap: 7px; white-space: nowrap; }
.it svg { width: 20px; height: 20px; }
.act { height: 24px; margin: 2px 0; background: #c0c0c0; border-radius: 2px; }
.cursor { position: absolute; left: 1110px; top: 310px; }
```

FILE: app.js
```js
const NS = 'http://www.w3.org/2000/svg';
function add(parent, name, attrs, text) {
  const el = document.createElementNS(NS, name);
  for (const k in attrs) el.setAttribute(k, attrs[k]);
  if (text !== undefined) el.textContent = text;
  parent.appendChild(el);
  return el;
}

// Rulers: 10 mm = 19.56 px
const MM = 1.956;
const top_ = document.getElementById('rulerTop');
const leftR = document.getElementById('rulerLeft');
let minor = '', major = '';
for (let mm = -156; mm <= 230; mm += 2) {
  const x = (365.5 + mm * MM).toFixed(1);
  if (+x < 58 || +x > 819) continue;
  if (mm % 50 === 0) {
    major += `M${x} 125V140`;
    add(top_, 'text', { x: +x + 1.5, y: 134.5, class: 'rlab' }, Math.abs(mm));
  } else minor += `M${x} ${mm % 10 === 0 ? 135 : 138}V140`;
}
add(top_, 'path', { d: minor, stroke: '#777', 'stroke-width': 1 });
add(top_, 'path', { d: major, stroke: '#666', 'stroke-width': 1 });
add(top_, 'path', { d: 'M42 140.5H820', stroke: '#555' });
add(top_, 'path', { d: 'M42 128.500H57M47.500 125V140', stroke: '#bbb', 'stroke-dasharray': '1 1' });
add(top_, 'path', { d: 'M57.500 125V141', stroke: '#555' });

minor = ''; major = '';
for (let mm = -4; mm <= 282; mm += 2) {
  const y = (149.5 + mm * MM).toFixed(1);
  if (mm % 50 === 0) {
    major += `M42 ${y}H57`;
    String(mm).split('').forEach((c, i) =>
      add(leftR, 'text', { x: 44, y: +y + 9.5 + i * 9, class: 'rlab' }, c));
  } else minor += `M${mm % 10 === 0 ? 52 : 55} ${y}H57`;
}
add(leftR, 'path', { d: minor, stroke: '#666' });
add(leftR, 'path', { d: major, stroke: '#666' });
add(leftR, 'path', { d: 'M42 498.500H57', stroke: '#555', 'stroke-dasharray': '1 1' });
add(leftR, 'path', { d: 'M57.500 141V702', stroke: '#333' });

// Frame handles: x, y, size, fill
const H = document.getElementById('handles');
[[425.5, 240.5, 6], [508.5, 240.5, 6], [593, 240.5, 6], [425.5, 258, 6], [425.5, 251, 8],
 [425.5, 276, 6], [508.5, 276, 6], [593, 276, 6], [593, 264, 7], [559, 240.5, 6, '#5896e8'],
 [593, 251.5, 6, '#e2ea45'],
 [714.5, 298.5, 6], [732, 298.5, 6], [725.5, 298, 8], [739.5, 297.5, 6, '#e2ea45'], [750.5, 298.5, 6],
 [750.5, 345, 6, '#5896e8'], [714.5, 414.5, 6], [750.5, 414.5, 6], [714.5, 531.5, 6],
 [732, 531.5, 6], [739.5, 531.5, 8], [750.5, 531.5, 6]
].forEach(([x, y, s, f]) => add(H, 'rect', {
  x: x - s / 2, y: y - s / 2, width: s, height: s, fill: f || '#fff',
  stroke: f === '#5896e8' ? f : '#8aa6b5'
}));

// Page thumbnails
const S = document.getElementById('spreads');
add(S, 'path', { d: 'M986.5 210.5h27v36h-27z', fill: '#fff', stroke: '#333' });
add(S, 'path', { d: 'M985.5 205v45', stroke: '#333' });
add(S, 'path', { d: 'M994 205h11l-5.5 5z', fill: '#333' });
add(S, 'path', { d: 'M990 214.5h6', stroke: '#555', 'stroke-dasharray': '2 .5' });
add(S, 'text', { x: 1003.5, y: 221 }, 'A');
add(S, 'text', { x: 998, y: 263, 'text-anchor': 'middle' }, '1');
['2-3', '4-5', '6-7', '8-9', '10-11', ''].forEach((t, i) => {
  const y = 274.5 + i * 64, on = t === '10-11';
  add(S, 'path', { d: `M955 ${y}h58.5v36h-58.5z`, fill: on ? '#8ab0e2' : '#fff', stroke: '#333' });
  add(S, 'path', { d: `M985.5 ${y - 5}v46`, stroke: '#333' });
  if (on) {
    add(S, 'path', { d: `M960 ${y + .5}h10v11h-10zM1002 ${y + .5}h11v11h-11z`, fill: '#fff' });
    add(S, 'path', { d: `M970 ${y + 4.5}h8`, stroke: '#345', 'stroke-dasharray': '2 .5' });
    add(S, 'rect', { x: 966.5, y: y + 41, width: 35.5, height: 13.5, fill: '#1e66b8' });
  }
  const w = on ? 700 : 400;
  add(S, 'text', { x: 958.5, y: y + 10.5, 'font-weight': w }, 'A');
  add(S, 'text', { x: 1003.5, y: y + 10.5, 'font-weight': w }, 'A');
  add(S, 'text', { x: 984, y: y + 52, 'text-anchor': 'middle', 'font-weight': w, style: on ? 'fill:#fff' : '' }, t);
});

// Folded copy of the bars
const M = document.getElementById('mirror');
const copy = id => { const n = document.getElementById(id).cloneNode(true); n.removeAttribute('id'); return n; };
const gap = document.createElement('div');
gap.className = 'gap';
M.append(copy('menubar'), copy('controlbar'), gap, copy('rulerTop'));
```
